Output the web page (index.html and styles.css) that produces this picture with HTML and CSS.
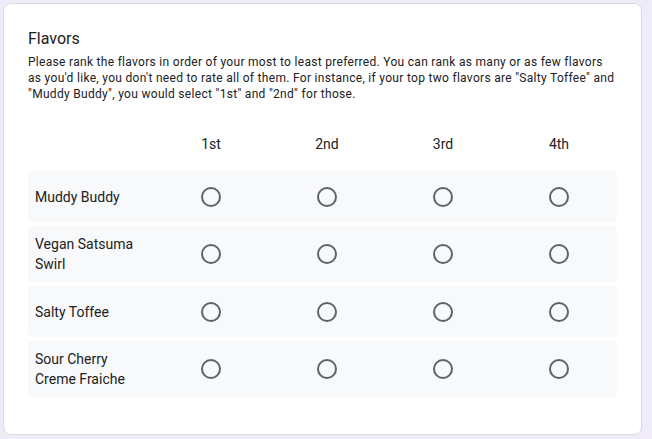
FILE: index.html
```html
<!DOCTYPE html>
<html lang="en">
<head>
  <meta charset="UTF-8">
  <meta name="viewport" content="width=device-width, initial-scale=1.0">
  <title>Flavors</title>
  <link rel="stylesheet" href="styles.css">
</head>
<body>
  <div class="card">
    <div class="title">Flavors</div>
    <div class="desc">Please rank the flavors in order of your most to least preferred. You can rank as many or as few flavors as you'd like, you don't need to rate all of them. For instance, if your top two flavors are "Salty Toffee" and "Muddy Buddy", you would select "1st" and "2nd" for those.</div>

    <div class="grid">
      <div class="head">
        <div></div>
        <div class="col">1st</div>
        <div class="col">2nd</div>
        <div class="col">3rd</div>
        <div class="col">4th</div>
      </div>
      <div class="row">
        <div class="label">Muddy Buddy</div>
        <div class="cell"><span class="radio"></span></div>
        <div class="cell"><span class="radio"></span></div>
        <div class="cell"><span class="radio"></span></div>
        <div class="cell"><span class="radio"></span></div>
      </div>
      <div class="row">
        <div class="label">Vegan Satsuma Swirl</div>
        <div class="cell"><span class="radio"></span></div>
        <div class="cell"><span class="radio"></span></div>
        <div class="cell"><span class="radio"></span></div>
        <div class="cell"><span class="radio"></span></div>
      </div>
      <div class="row">
        <div class="label">Salty Toffee</div>
        <div class="cell"><span class="radio"></span></div>
        <div class="cell"><span class="radio"></span></div>
        <div class="cell"><span class="radio"></span></div>
        <div class="cell"><span class="radio"></span></div>
      </div>
      <div class="row">
        <div class="label">Sour Cherry Creme Fraiche</div>
        <div class="cell"><span class="radio"></span></div>
        <div class="cell"><span class="radio"></span></div>
        <div class="cell"><span class="radio"></span></div>
        <div class="cell"><span class="radio"></span></div>
      </div>
    </div>
  </div>
</body>
</html>
```

FILE: styles.css
```css
body {
  margin: 0;
  padding: 3px 10px 4px 3px;
  background: #f0ebf8;
  font-family: Roboto, "Noto Sans", sans-serif;
  color: #202124;
}
.card {
  box-sizing: border-box;
  height: 432px;
  background: #fff;
  border: 1px solid #dadce0;
  border-radius: 8px;
  padding: 23px 24px 0 24px;
}
.title {
  font-size: 16px;
  line-height: 24px;
}
.desc {
  margin-top: 3px;
  padding-right: 2px;
  font-size: 12px;
  line-height: 16px;
  letter-spacing: 0.3px;
}
.grid {
  margin-top: 22px;
  display: flex;
  flex-direction: column;
  gap: 4px;
}
.head, .row {
  display: grid;
  grid-template-columns: 125px repeat(4, 1fr);
  align-items: center;
}
.head {
  height: 40px;
  margin-bottom: 3px;
  font-size: 14px;
}
.col {
  text-align: center;
}
.row {
  min-height: 51px;
  background: #f8f9fa;
  border-radius: 4px;
}
.label {
  font-size: 14px;
  line-height: 20px;
  padding: 8px 7px;
}
.cell {
  display: flex;
  justify-content: center;
}
.radio {
  box-sizing: border-box;
  width: 20px;
  height: 20px;
  border: 2px solid #5f6368;
  border-radius: 50%;
}
```
